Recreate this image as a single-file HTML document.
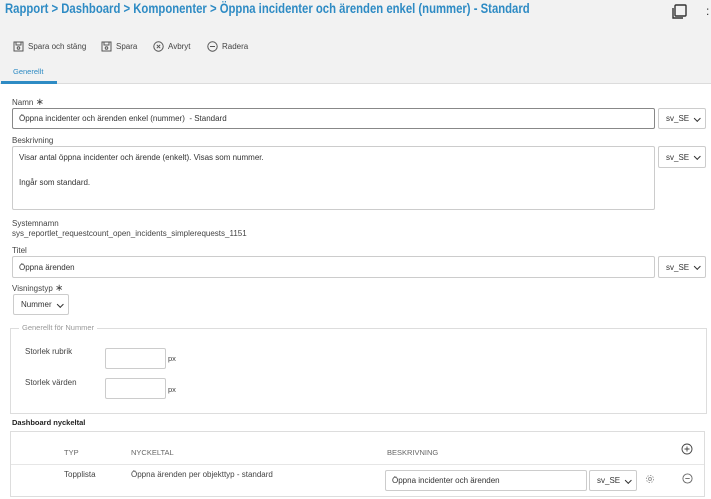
<!DOCTYPE html>
<html><head><meta charset="utf-8"><style>
*{box-sizing:border-box;margin:0;padding:0}
body{width:711px;height:499px;overflow:hidden;background:#fff;font-family:"Liberation Sans",sans-serif;color:#333;position:relative;font-size:8px}
.a{position:absolute;white-space:nowrap}
.hdr{position:absolute;left:0;top:0;width:711px;height:84px;background:#f2f2f2;border-bottom:1px solid #dcdcdc}
.inp{position:absolute;border:1px solid #ccc;background:#fff;border-radius:2px;font-size:8px;padding-left:6px;display:flex;align-items:center;color:#333}
.sel{position:absolute;border:1px solid #ccc;background:#fff;border-radius:2px;font-size:8px;padding-left:7px;display:flex;align-items:center;color:#333}
.sel:after{content:"";position:absolute;right:6px;top:50%;width:3.5px;height:3.5px;border-right:1.3px solid #333;border-bottom:1.3px solid #333;transform:translateY(-70%) rotate(45deg)}
.lbl{font-size:8px;color:#444}
.th{font-size:7.5px;color:#666}
</style></head><body>
<div class="hdr"></div>
<div class="a" style="left:5px;top:1px;font-size:13.4px;color:#2e8bc4;font-weight:bold;transform:scaleX(0.845);transform-origin:0 0">Rapport &gt; Dashboard &gt; Komponenter &gt; Öppna incidenter och ärenden enkel (nummer) - Standard</div>
<svg class="a" style="left:670px;top:3px" width="18" height="18" viewBox="0 0 18 18" fill="none" stroke="#333" stroke-width="1.4"><rect x="5" y="2" width="11" height="11" rx="1"/><path d="M3 5v10h10"/></svg>
<div class="a" style="left:706px;top:4px;font-size:12px">:</div>
<svg class="a" style="left:13px;top:41px" width="11" height="11" viewBox="0 0 11 11" fill="none" stroke="#555" stroke-width="1"><rect x="1" y="1" width="9" height="9"/><rect x="3" y="1" width="5" height="3"/><circle cx="5.5" cy="7" r="1.3"/></svg>
<div class="a" style="left:28px;top:42px;color:#444">Spara och stäng</div>
<svg class="a" style="left:101px;top:41px" width="11" height="11" viewBox="0 0 11 11" fill="none" stroke="#555" stroke-width="1"><rect x="1" y="1" width="9" height="9"/><rect x="3" y="1" width="5" height="3"/><circle cx="5.5" cy="7" r="1.3"/></svg>
<div class="a" style="left:116px;top:42px;color:#444">Spara</div>
<svg class="a" style="left:153px;top:41px" width="11" height="11" viewBox="0 0 11 11" fill="none" stroke="#555" stroke-width="1"><circle cx="5.5" cy="5.5" r="4.7"/><path d="M3.8 3.8l3.4 3.4M7.2 3.8l-3.4 3.4"/></svg>
<div class="a" style="left:168px;top:42px;color:#444">Avbryt</div>
<svg class="a" style="left:207px;top:41px" width="11" height="11" viewBox="0 0 11 11" fill="none" stroke="#555" stroke-width="1"><circle cx="5.5" cy="5.5" r="4.7"/><path d="M3 5.5h5"/></svg>
<div class="a" style="left:222px;top:42px;color:#444">Radera</div>
<div class="a" style="left:13px;top:67px;color:#2e8bc4;font-size:7.5px">Generellt</div>
<div class="a" style="left:1px;top:81px;width:56px;height:3px;background:#2e8bc4"></div>

<div class="a lbl" style="left:12px;top:97px">Namn <span style="font-size:10px">∗</span></div>
<div class="inp" style="left:12px;top:108px;width:643px;height:21px;border-color:#888">Öppna incidenter och ärenden enkel (nummer)&nbsp; - Standard</div>
<div class="sel" style="left:658px;top:108px;width:48px;height:21px">sv_SE</div>
<div class="a lbl" style="left:12px;top:136px">Beskrivning</div>
<div class="inp" style="left:12px;top:146px;width:643px;height:64px;align-items:flex-start;padding-top:5px;line-height:12.5px;white-space:normal">Visar antal öppna incidenter och ärende (enkelt). Visas som nummer.<br><br>Ingår som standard.</div>
<div class="sel" style="left:658px;top:146px;width:48px;height:22px">sv_SE</div>
<div class="a lbl" style="left:12px;top:219px">Systemnamn</div>
<div class="a lbl" style="left:12px;top:229px">sys_reportlet_requestcount_open_incidents_simplerequests_1151</div>
<div class="a lbl" style="left:12px;top:246px">Titel</div>
<div class="inp" style="left:12px;top:256px;width:643px;height:22px">Öppna ärenden</div>
<div class="sel" style="left:658px;top:256px;width:48px;height:22px">sv_SE</div>
<div class="a lbl" style="left:12px;top:283px">Visningstyp <span style="font-size:10px">∗</span></div>
<div class="sel" style="left:13px;top:294px;width:56px;height:21px;padding-left:7px">Nummer</div>

<div class="a" style="left:10px;top:328px;width:697px;height:86px;border:1px solid #ddd"></div>
<div class="a" style="left:19px;top:323px;background:#fff;padding:0 3px;color:#999;font-size:7.5px">Generellt för Nummer</div>
<div class="a lbl" style="left:25px;top:347px">Storlek rubrik</div>
<div class="inp" style="left:105px;top:348px;width:61px;height:21px"></div>
<div class="a lbl" style="left:168px;top:354px;font-size:7.5px">px</div>
<div class="a lbl" style="left:25px;top:378px">Storlek värden</div>
<div class="inp" style="left:105px;top:378px;width:61px;height:21px"></div>
<div class="a lbl" style="left:168px;top:385px;font-size:7.5px">px</div>

<div class="a" style="left:12px;top:418px;font-weight:bold;font-size:7.5px;color:#222">Dashboard nyckeltal</div>
<div class="a" style="left:10px;top:431px;width:695px;height:66px;border:1px solid #ddd"></div>
<div class="a th" style="left:64px;top:448px">TYP</div>
<div class="a th" style="left:131px;top:448px">NYCKELTAL</div>
<div class="a th" style="left:387px;top:448px">BESKRIVNING</div>
<svg class="a" style="left:681px;top:443px" width="12" height="12" viewBox="0 0 12 12" fill="none" stroke="#444" stroke-width="0.9"><circle cx="6" cy="6" r="5"/><path d="M3.5 6h5M6 3.5v5"/></svg>
<div class="a" style="left:11px;top:464px;width:693px;height:1px;background:#e6e6e6"></div>
<div class="a lbl" style="left:64px;top:470px">Topplista</div>
<div class="a lbl" style="left:131px;top:470px">Öppna ärenden per objekttyp - standard</div>
<div class="inp" style="left:385px;top:470px;width:202px;height:21px">Öppna incidenter och ärenden</div>
<div class="sel" style="left:589px;top:470px;width:48px;height:21px">sv_SE</div>
<svg class="a" style="left:645px;top:474px" width="10" height="10" viewBox="0 0 10 10" fill="none" stroke="#999" stroke-width="0.9"><circle cx="5" cy="5" r="1.5"/><circle cx="5" cy="5" r="3.6" stroke-dasharray="1.5 1.3"/></svg>
<svg class="a" style="left:682px;top:473px" width="11" height="11" viewBox="0 0 11 11" fill="none" stroke="#666" stroke-width="0.9"><circle cx="5.5" cy="5.5" r="4.6"/><path d="M3.3 5.5h4.4"/></svg>
</body></html>
